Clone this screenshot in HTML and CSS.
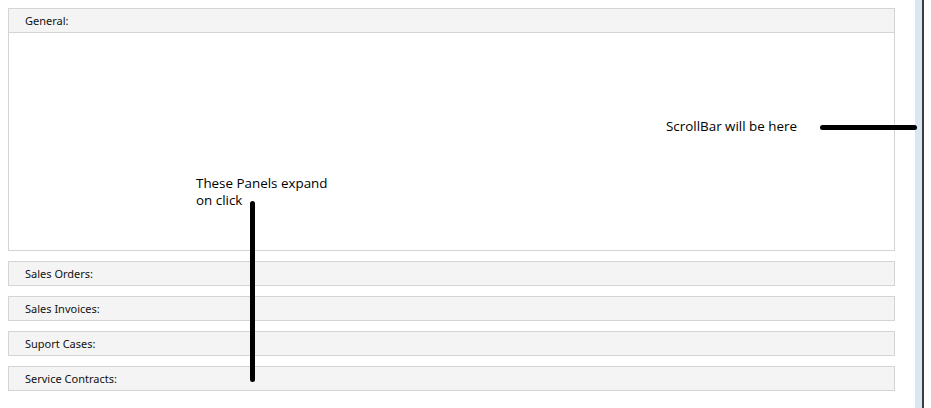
FILE: index.html
```html
<!DOCTYPE html>
<html>
<head>
<meta charset="utf-8">
<link rel="stylesheet" href="styles.css">
</head>
<body>
<div class="page">
  <div class="panels">
    <section class="panel panel-open">
      <div class="panel-header">General:</div>
      <div class="panel-body"></div>
    </section>
    <section class="panel">
      <div class="panel-header">Sales Orders:</div>
    </section>
    <section class="panel">
      <div class="panel-header">Sales Invoices:</div>
    </section>
    <section class="panel">
      <div class="panel-header">Suport Cases:</div>
    </section>
    <section class="panel">
      <div class="panel-header">Service Contracts:</div>
    </section>
  </div>
  <div class="scroll-track"></div>
  <div class="scroll-edge"></div>
</div>
<div class="note note-scroll">ScrollBar will be here</div>
<div class="line line-h"></div>
<div class="note note-panels">These Panels expand<br>on click</div>
<div class="line line-v"></div>
</body>
</html>
```
FILE: styles.css
```css
html, body {
  margin: 0;
  padding: 0;
  background: #ffffff;
}
body {
  width: 931px;
  height: 408px;
  overflow: hidden;
  position: relative;
  font-family: "Noto Sans", "Open Sans", sans-serif;
}
.page {
  display: flex;
  height: 408px;
}
.panels {
  width: 887px;
  padding: 8px 0 0 8px;
  display: flex;
  flex-direction: column;
  gap: 10px;
}
.panel {
  border: 1px solid #d4d4d4;
  background: #ffffff;
}
.panel-header {
  height: 23px;
  line-height: 23px;
  background: #f4f4f4;
  padding-left: 16px;
  font-size: 11px;
  color: #111;
}
.panel-open .panel-header {
  border-bottom: 1px solid #d4d4d4;
}
.panel-body {
  height: 217px;
}
.scroll-track {
  margin-left: 20px;
  width: 7px;
  background: #dbe6f3;
}
.scroll-edge {
  width: 2px;
  background: #3c3c3c;
}
.note {
  position: absolute;
  font-family: "Open Sans", "Noto Sans", sans-serif;
  font-size: 13.4px;
  line-height: 17px;
  color: #000;
}
.note-scroll {
  left: 666px;
  top: 118px;
}
.note-panels {
  left: 196px;
  top: 175px;
}
.line {
  position: absolute;
  background: #000;
  border-radius: 3px;
}
.line-h {
  left: 820px;
  top: 125px;
  width: 97px;
  height: 5px;
}
.line-v {
  left: 250px;
  top: 201px;
  width: 5px;
  height: 181px;
}
```
